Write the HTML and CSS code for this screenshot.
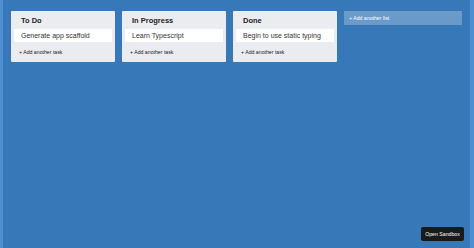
FILE: index.html
```html
<html>
  <head>
    <link rel="stylesheet" href="styles.css">
  </head>
  <body>
    <div class="board">
      <div class="list">
        <div class="list_title">To Do</div>
        <div class="task">Generate app scaffold</div>
        <div class="add_task">+ Add another task</div>
      </div>
      <div class="list">
        <div class="list_title">In Progress</div>
        <div class="task">Learn Typescript</div>
        <div class="add_task">+ Add another task</div>
      </div>
      <div class="list">
        <div class="list_title">Done</div>
        <div class="task">Begin to use static typing</div>
        <div class="add_task">+ Add another task</div>
      </div>
      <div class="add_list">+ Add another list</div>
    </div>
    <div class="sandbox_btn">Open Sandbox</div>
  </body>
</html>
```

FILE: styles.css
```css
body {
  margin: 0;
  height: 248px;
  background-color: #3778b9;
  border-left: 3px solid #4d8fd0;
  border-right: 4px solid #4d8fd0;
  box-sizing: border-box;
  font-family: "Liberation Sans", Arial, sans-serif;
  position: relative;
  overflow: hidden;
}
.board {
  display: flex;
  align-items: flex-start;
  gap: 7px;
  padding: 11px 8px;
}
.list {
  width: 104px;
  background-color: #ebecf0;
  padding: 0 3px;
  box-sizing: border-box;
  border-radius: 1px;
}
.list_title {
  height: 18px;
  line-height: 19px;
  padding-left: 7px;
  font-size: 7.5px;
  font-weight: bold;
  color: #222;
}
.task {
  background-color: white;
  height: 13px;
  line-height: 13px;
  padding-left: 7px;
  font-size: 7px;
  color: #333;
  white-space: nowrap;
}
.add_task {
  height: 20px;
  line-height: 21px;
  padding-left: 5px;
  font-size: 5.2px;
  color: #222;
}
.add_list {
  width: 118px;
  height: 14px;
  line-height: 14px;
  padding-left: 5px;
  box-sizing: border-box;
  background-color: rgba(255, 255, 255, 0.25);
  color: white;
  font-size: 5.2px;
}
.sandbox_btn {
  position: absolute;
  right: 6px;
  bottom: 7px;
  width: 43px;
  height: 14px;
  line-height: 14px;
  text-align: center;
  background-color: #1a1a1a;
  color: white;
  font-size: 5.2px;
  border-radius: 2px;
}
```
